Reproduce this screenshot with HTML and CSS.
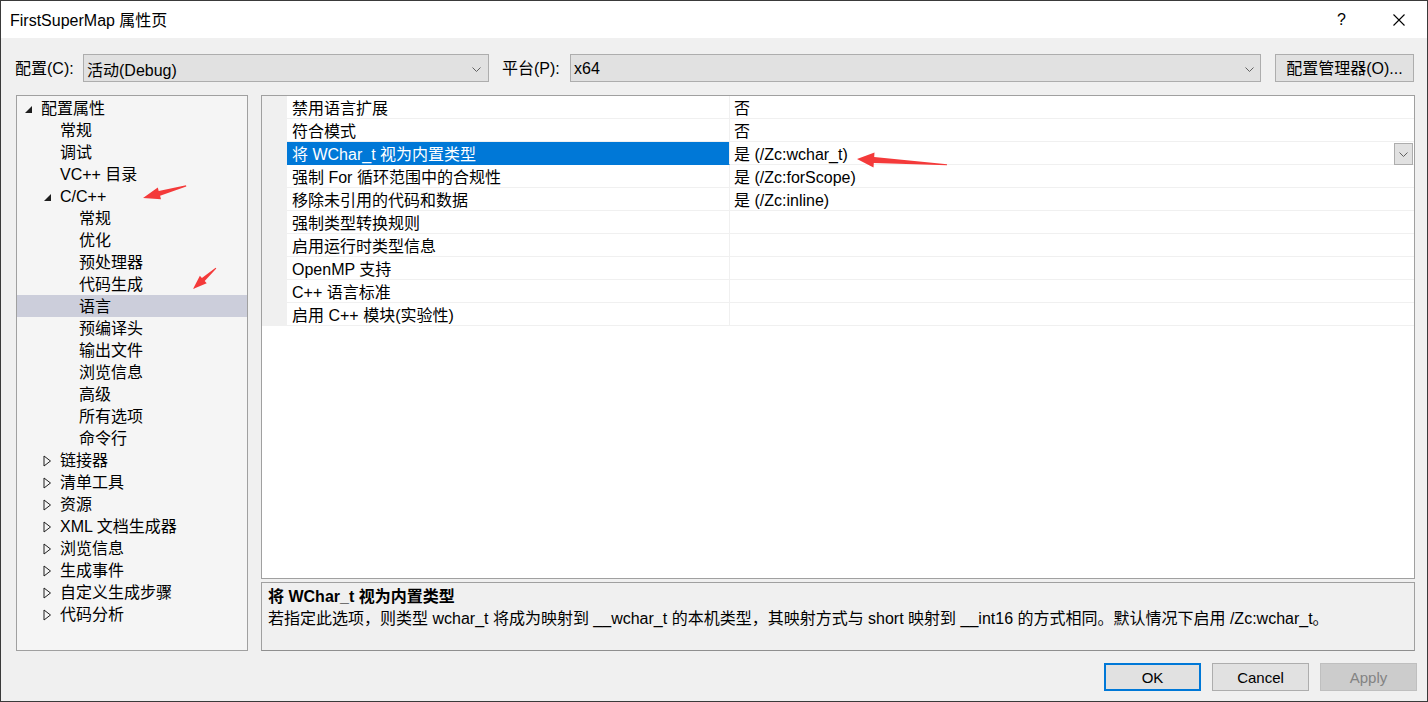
FILE: index.html
```html
<!DOCTYPE html>
<html lang="zh-CN">
<head>
    <meta charset="UTF-8">
    <title>FirstSuperMap 属性页</title>
    <link rel="stylesheet" href="styles.css">
</head>
<body>
<div class="window">
    <div class="titlebar">
        <span class="title">FirstSuperMap 属性页</span>
        <div class="caption-btns">
            <span class="cap-btn">?</span>
            <span class="cap-btn">
                <svg width="12" height="12" viewBox="0 0 12 12"><path d="M0.5 0.5 L11.5 11.5 M11.5 0.5 L0.5 11.5" stroke="#000" stroke-width="1.1" fill="none"/></svg>
            </span>
        </div>
    </div>

    <div class="client">
        <!-- configuration / platform row -->
        <div class="config-row">
            <span class="lbl">配置(C):</span>
            <div class="combo combo-config">
                <span>活动(Debug)</span>
                <svg class="chev" width="9" height="5" viewBox="0 0 9 5"><path d="M0.5 0.5 L4.5 4.5 L8.5 0.5" stroke="#606060" fill="none"/></svg>
            </div>
            <span class="lbl lbl-platform">平台(P):</span>
            <div class="combo combo-platform">
                <span>x64</span>
                <svg class="chev" width="9" height="5" viewBox="0 0 9 5"><path d="M0.5 0.5 L4.5 4.5 L8.5 0.5" stroke="#606060" fill="none"/></svg>
            </div>
            <button class="btn btn-manager">配置管理器(O)...</button>
        </div>

        <div class="main">
            <!-- left tree -->
            <div class="tree">
                <div class="node lvl0"><span class="tw"><svg width="9" height="9" viewBox="0 0 9 9"><path d="M8 1 L8 8 L1 8 Z" fill="#1e1e1e"/></svg></span>配置属性</div>
                <div class="node lvl1"><span class="tw"></span>常规</div>
                <div class="node lvl1"><span class="tw"></span>调试</div>
                <div class="node lvl1"><span class="tw"></span>VC++ 目录</div>
                <div class="node lvl1"><span class="tw"><svg width="9" height="9" viewBox="0 0 9 9"><path d="M8 1 L8 8 L1 8 Z" fill="#1e1e1e"/></svg></span>C/C++</div>
                <div class="node lvl2"><span class="tw"></span>常规</div>
                <div class="node lvl2"><span class="tw"></span>优化</div>
                <div class="node lvl2"><span class="tw"></span>预处理器</div>
                <div class="node lvl2"><span class="tw"></span>代码生成</div>
                <div class="node lvl2 selected"><span class="tw"></span>语言</div>
                <div class="node lvl2"><span class="tw"></span>预编译头</div>
                <div class="node lvl2"><span class="tw"></span>输出文件</div>
                <div class="node lvl2"><span class="tw"></span>浏览信息</div>
                <div class="node lvl2"><span class="tw"></span>高级</div>
                <div class="node lvl2"><span class="tw"></span>所有选项</div>
                <div class="node lvl2"><span class="tw"></span>命令行</div>
                <div class="node lvl1"><span class="tw"><svg width="9" height="12" viewBox="0 0 9 12"><path d="M1 1 L7.5 6 L1 11 Z" stroke="#1e1e1e" fill="none"/></svg></span>链接器</div>
                <div class="node lvl1"><span class="tw"><svg width="9" height="12" viewBox="0 0 9 12"><path d="M1 1 L7.5 6 L1 11 Z" stroke="#1e1e1e" fill="none"/></svg></span>清单工具</div>
                <div class="node lvl1"><span class="tw"><svg width="9" height="12" viewBox="0 0 9 12"><path d="M1 1 L7.5 6 L1 11 Z" stroke="#1e1e1e" fill="none"/></svg></span>资源</div>
                <div class="node lvl1"><span class="tw"><svg width="9" height="12" viewBox="0 0 9 12"><path d="M1 1 L7.5 6 L1 11 Z" stroke="#1e1e1e" fill="none"/></svg></span>XML 文档生成器</div>
                <div class="node lvl1"><span class="tw"><svg width="9" height="12" viewBox="0 0 9 12"><path d="M1 1 L7.5 6 L1 11 Z" stroke="#1e1e1e" fill="none"/></svg></span>浏览信息</div>
                <div class="node lvl1"><span class="tw"><svg width="9" height="12" viewBox="0 0 9 12"><path d="M1 1 L7.5 6 L1 11 Z" stroke="#1e1e1e" fill="none"/></svg></span>生成事件</div>
                <div class="node lvl1"><span class="tw"><svg width="9" height="12" viewBox="0 0 9 12"><path d="M1 1 L7.5 6 L1 11 Z" stroke="#1e1e1e" fill="none"/></svg></span>自定义生成步骤</div>
                <div class="node lvl1"><span class="tw"><svg width="9" height="12" viewBox="0 0 9 12"><path d="M1 1 L7.5 6 L1 11 Z" stroke="#1e1e1e" fill="none"/></svg></span>代码分析</div>
            </div>

            <div class="right">
                <!-- property grid -->
                <div class="grid">
                    <div class="prop"><span class="gutter"></span><span class="pname">禁用语言扩展</span><span class="pval">否</span></div>
                    <div class="prop"><span class="gutter"></span><span class="pname">符合模式</span><span class="pval">否</span></div>
                    <div class="prop active"><span class="gutter"></span><span class="pname">将 WChar_t 视为内置类型</span><span class="pval">是 (/Zc:wchar_t)<span class="drop"><svg width="9" height="5" viewBox="0 0 9 5"><path d="M0.5 0.5 L4.5 4.5 L8.5 0.5" stroke="#606060" fill="none"/></svg></span></span></div>
                    <div class="prop"><span class="gutter"></span><span class="pname">强制 For 循环范围中的合规性</span><span class="pval">是 (/Zc:forScope)</span></div>
                    <div class="prop"><span class="gutter"></span><span class="pname">移除未引用的代码和数据</span><span class="pval">是 (/Zc:inline)</span></div>
                    <div class="prop"><span class="gutter"></span><span class="pname">强制类型转换规则</span><span class="pval"></span></div>
                    <div class="prop"><span class="gutter"></span><span class="pname">启用运行时类型信息</span><span class="pval"></span></div>
                    <div class="prop"><span class="gutter"></span><span class="pname">OpenMP 支持</span><span class="pval"></span></div>
                    <div class="prop"><span class="gutter"></span><span class="pname">C++ 语言标准</span><span class="pval"></span></div>
                    <div class="prop"><span class="gutter"></span><span class="pname">启用 C++ 模块(实验性)</span><span class="pval"></span></div>
                </div>

                <!-- description -->
                <div class="desc">
                    <div class="desc-title">将 WChar_t 视为内置类型</div>
                    <div class="desc-text">若指定此选项，则类型 wchar_t 将成为映射到 __wchar_t 的本机类型，其映射方式与 short 映射到 __int16 的方式相同。默认情况下启用 /Zc:wchar_t。</div>
                </div>
            </div>
        </div>

        <div class="footer">
            <button class="btn btn-ok">OK</button>
            <button class="btn">Cancel</button>
            <button class="btn btn-disabled">Apply</button>
        </div>
    </div>

    <!-- red annotation arrows drawn over the screenshot -->
    <svg class="annotations" width="1428" height="702" viewBox="0 0 1428 702">
        <polygon points="143,198 157.8,187.6 158.7,191 186,185.3 186.3,186.5 160.1,195.8 161,199.2" fill="#f43a3a"/>
        <polygon points="193,289 199.9,275.8 201.9,278 215.6,267.7 216.3,268.4 204.7,281 206.7,283.2" fill="#f43a3a"/>
        <polygon points="857,159 874.5,152.6 874.2,157.1 947,164.3 947,165.3 873.8,163.1 873.5,167.6" fill="#f43a3a"/>
    </svg>
</div>
</body>
</html>
```

FILE: styles.css
```css
body {
    margin: 0;
    padding: 0;
    font-family: "Liberation Sans", "Noto Sans CJK SC", sans-serif;
    font-size: 16px;
    color: #000;
    background-color: #f0f0f0;
}
.window {
    position: relative;
    width: 1428px;
    height: 702px;
    box-sizing: border-box;
    border: 1px solid #3a3a3a;
    display: flex;
    flex-direction: column;
    background-color: #f0f0f0;
    overflow: hidden;
}
.titlebar {
    height: 37px;
    flex: none;
    display: flex;
    align-items: center;
    padding-left: 9px;
    background-color: #fff;
}
.title {
    flex: 1;
    line-height: 20px;
    padding-top: 2px;
}
.caption-btns {
    display: flex;
    height: 100%;
}
.cap-btn {
    width: 57px;
    height: 100%;
    display: flex;
    align-items: center;
    justify-content: center;
    font-size: 16px;
}
.client {
    flex: 1;
    display: flex;
    flex-direction: column;
    padding: 16px 10px 0 14px;
}
.config-row {
    display: flex;
    align-items: center;
    height: 28px;
}
.lbl {
    width: 68px;
    flex: none;
    line-height: 20px;
    padding-top: 2px;
}
.lbl-platform {
    margin-left: 13px;
}
.combo {
    height: 28px;
    box-sizing: border-box;
    border: 1px solid #adadad;
    background-color: #e1e1e1;
    display: flex;
    align-items: center;
    justify-content: space-between;
    padding: 2px 7px 0 3px;
}
.combo-config {
    width: 406px;
}
.combo-platform {
    width: 691px;
    padding-right: 6px;
}
.btn {
    font-family: inherit;
    font-size: 15px;
    color: #000;
    height: 28px;
    width: 97px;
    box-sizing: border-box;
    border: 1px solid #adadad;
    background-color: #e1e1e1;
    padding: 2px 0 0 0;
    line-height: 20px;
}
.btn-manager {
    margin-left: 14px;
    width: 139px;
    font-size: 16px;
}
.main {
    display: flex;
    margin-top: 13px;
    height: 556px;
    padding-left: 1px;
}
.tree {
    width: 232px;
    box-sizing: border-box;
    border: 1px solid #a0a0a0;
    background-color: #f5f5f5;
    padding-top: 1px;
}
.node {
    height: 22px;
    box-sizing: border-box;
    padding-top: 2px;
    line-height: 20px;
    display: flex;
    align-items: center;
    white-space: nowrap;
}
.node.lvl0 { padding-left: 7px; }
.node.lvl1 { padding-left: 26px; }
.node.lvl2 { padding-left: 45px; }
.node.selected {
    background-color: #cccedb;
}
.tw {
    width: 17px;
    flex: none;
    display: flex;
    align-items: center;
}
.right {
    width: 1154px;
    margin-left: 13px;
    display: flex;
    flex-direction: column;
}
.grid {
    height: 484px;
    box-sizing: border-box;
    border: 1px solid #a0a0a0;
    background-color: #fff;
}
.prop {
    display: flex;
    height: 23px;
    line-height: 22px;
}
.gutter {
    width: 25px;
    flex: none;
    background-color: #f0f0f0;
}
.pname {
    width: 443px;
    flex: none;
    padding: 3px 0 0 5px;
    box-sizing: border-box;
    border-right: 1px solid #f0f0f0;
    border-bottom: 1px solid #f0f0f0;
    line-height: 19px;
    white-space: nowrap;
}
.pval {
    flex: 1;
    display: flex;
    align-items: flex-start;
    padding: 3px 0 0 4px;
    line-height: 19px;
    border-bottom: 1px solid #f0f0f0;
    white-space: nowrap;
}
.prop.active .pname {
    background-color: #0078d7;
    color: #fff;
    border-bottom-color: #0078d7;
}
.drop {
    margin: -2px 1px 0 auto;
    width: 19px;
    height: 22px;
    box-sizing: border-box;
    border: 1px solid #adadad;
    background-color: #e1e1e1;
    display: flex;
    align-items: center;
    justify-content: center;
}
.desc {
    margin-top: 3px;
    flex: 1;
    box-sizing: border-box;
    border: 1px solid #a0a0a0;
    border-bottom-color: #8f8f8f;
    background-color: #f0f0f0;
    padding: 3px 6px 0 6px;
}
.desc-title {
    font-weight: bold;
    line-height: 22px;
}
.desc-text {
    line-height: 22px;
    white-space: nowrap;
}
.footer {
    display: flex;
    justify-content: flex-end;
    gap: 11px;
    margin-top: 12px;
}
.btn-ok {
    border: 2px solid #0078d7;
}
.btn-disabled {
    background-color: #cccccc;
    border-color: #bfbfbf;
    color: #838383;
}
.annotations {
    position: absolute;
    left: -1px;
    top: -1px;
    pointer-events: none;
}
```
